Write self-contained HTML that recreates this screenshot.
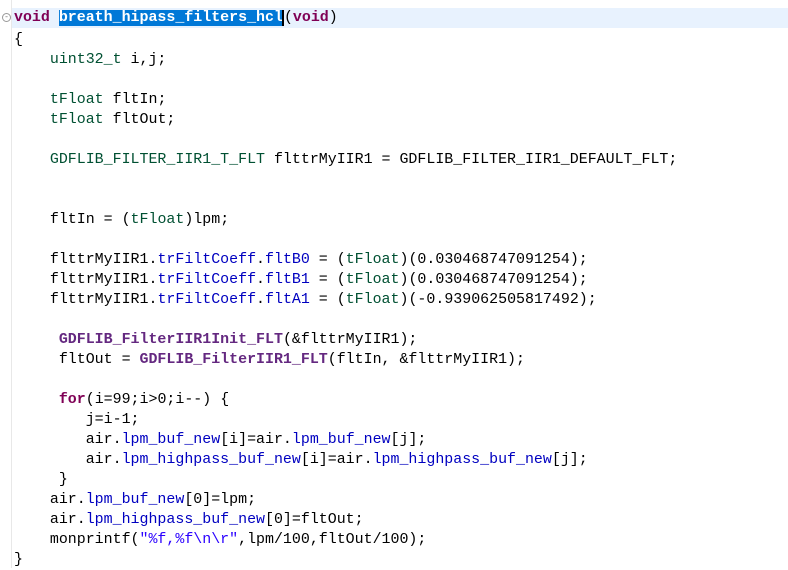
<!DOCTYPE html><html><head><style>
body{margin:0;width:788px;height:568px;background:#fff;overflow:hidden;position:relative;font-family:"Liberation Mono",monospace;}
.g{position:absolute;left:11px;top:0;width:1px;height:568px;background:#e8e8e8}
.hl{position:absolute;left:12px;top:8px;width:776px;height:20px;background:#e8f2fe}
.l{position:absolute;left:14px;margin-top:2px;font-size:14.95px;line-height:20px;white-space:pre;color:#000}
.k{color:#7f0055;font-weight:bold}.t{color:#005032}.f{color:#0000c0}.fn{color:#642880;font-weight:bold}.s{color:#2a00ff}
.sel{background:#0078d7;color:#fff;font-weight:bold}
.fold{position:absolute;left:2px;top:13px;width:7px;height:7px;border:1px solid #999;border-radius:50%;font-size:8px;line-height:7px;text-align:center;color:#777}
</style></head><body>
<div class="g"></div><div class="hl"></div>
<div class="fold">-</div>
<div class="l" style="top:6px;line-height:20px"><span class="k">void</span> <span class="sel">breath_hipass_filters_hcl</span><span style="border-left:2px solid #000;margin-left:-1px"></span>(<span class="k">void</span>)</div>
<div class="l" style="top:28px">{</div>
<div class="l" style="top:48px">    <span class="t">uint32_t</span> i,j;</div>
<div class="l" style="top:88px">    <span class="t">tFloat</span> fltIn;</div>
<div class="l" style="top:108px">    <span class="t">tFloat</span> fltOut;</div>
<div class="l" style="top:148px">    <span class="t">GDFLIB_FILTER_IIR1_T_FLT</span> flttrMyIIR1 = GDFLIB_FILTER_IIR1_DEFAULT_FLT;</div>
<div class="l" style="top:208px">    fltIn = (<span class="t">tFloat</span>)lpm;</div>
<div class="l" style="top:248px">    flttrMyIIR1.<span class="f">trFiltCoeff</span>.<span class="f">fltB0</span> = (<span class="t">tFloat</span>)(0.030468747091254);</div>
<div class="l" style="top:268px">    flttrMyIIR1.<span class="f">trFiltCoeff</span>.<span class="f">fltB1</span> = (<span class="t">tFloat</span>)(0.030468747091254);</div>
<div class="l" style="top:288px">    flttrMyIIR1.<span class="f">trFiltCoeff</span>.<span class="f">fltA1</span> = (<span class="t">tFloat</span>)(-0.939062505817492);</div>
<div class="l" style="top:328px">     <span class="fn">GDFLIB_FilterIIR1Init_FLT</span>(&amp;flttrMyIIR1);</div>
<div class="l" style="top:348px">     fltOut = <span class="fn">GDFLIB_FilterIIR1_FLT</span>(fltIn, &amp;flttrMyIIR1);</div>
<div class="l" style="top:388px">     <span class="k">for</span>(i=99;i&gt;0;i--) {</div>
<div class="l" style="top:408px">        j=i-1;</div>
<div class="l" style="top:428px">        air.<span class="f">lpm_buf_new</span>[i]=air.<span class="f">lpm_buf_new</span>[j];</div>
<div class="l" style="top:448px">        air.<span class="f">lpm_highpass_buf_new</span>[i]=air.<span class="f">lpm_highpass_buf_new</span>[j];</div>
<div class="l" style="top:468px">     }</div>
<div class="l" style="top:488px">    air.<span class="f">lpm_buf_new</span>[0]=lpm;</div>
<div class="l" style="top:508px">    air.<span class="f">lpm_highpass_buf_new</span>[0]=fltOut;</div>
<div class="l" style="top:528px">    monprintf(<span class="s">"%f,%f\n\r"</span>,lpm/100,fltOut/100);</div>
<div class="l" style="top:548px">}</div>
</body></html>
